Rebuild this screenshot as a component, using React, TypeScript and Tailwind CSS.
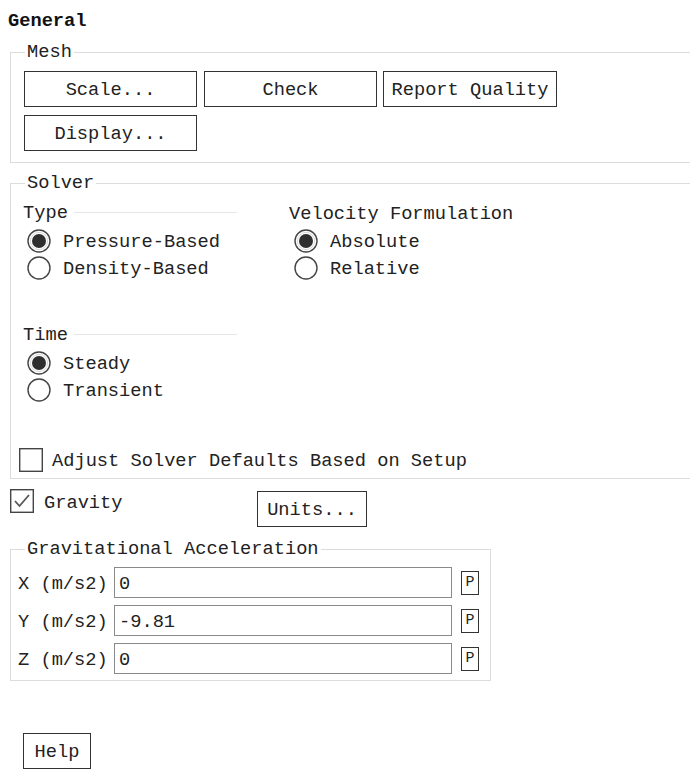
import React from "react";

const font = "font-['Liberation_Mono','DejaVu_Sans_Mono',monospace]";

function Radio({ checked, label }: { checked?: boolean; label: string }) {
  return (
    <div className="flex h-[27px] items-center gap-[12px]">
      <svg width="24" height="24" viewBox="0 0 24 24" className="shrink-0">
        <circle cx="12" cy="12" r="11" fill="#fff" stroke="#444" strokeWidth="1.4" />
        {checked ? (
          <>
            <circle cx="12" cy="12" r="8.6" fill="none" stroke="#d8d8d8" strokeWidth="1" />
            <circle cx="12" cy="12" r="7" fill="#2e2e2e" />
          </>
        ) : null}
      </svg>
      <span className="pt-[2px]">{label}</span>
    </div>
  );
}

function Check({ checked }: { checked?: boolean }) {
  return (
    <svg width="24" height="24" viewBox="0 0 24 24" className="shrink-0">
      <rect x="0.7" y="0.7" width="22.6" height="22.6" fill="#fff" stroke="#444" strokeWidth="1.4" />
      {checked ? (
        <polyline points="5,12 9.5,17 19,6" fill="none" stroke="#555" strokeWidth="1.8" />
      ) : null}
    </svg>
  );
}

function Btn({ children, className = "" }: { children: React.ReactNode; className?: string }) {
  return (
    <button
      type="button"
      className={`flex h-[36px] items-center justify-center border-[1.5px] border-[#333] bg-white pt-[2px] text-[#222] ${className}`}
    >
      {children}
    </button>
  );
}

function SubHeading({ label }: { label: string }) {
  return (
    <div className="ml-[-1px] flex h-[22px] w-[214px] items-center gap-[6px]">
      <span className="pt-[2px]">{label}</span>
      <div className="h-px flex-1 bg-[#e6e6e6]" />
    </div>
  );
}

function AccelRow({ axis, value }: { axis: string; value: string }) {
  return (
    <div className="flex h-[31px] items-center">
      <span className="w-[96px] pt-[2px]">{axis} (m/s2)</span>
      <div className="flex h-[31px] w-[338px] items-center border border-[#8a8a8a] bg-white pl-[4px] pt-[2px]">
        {value}
      </div>
      <div className="ml-[9px] flex h-[24px] w-[18px] items-center justify-center border-[1.5px] border-[#333] text-[15px] leading-none">
        P
      </div>
    </div>
  );
}

export default function App() {
  return (
    <div className={`${font} h-[779px] w-[690px] overflow-hidden bg-white text-[18.7px] leading-[22px] text-[#222]`}>
      <div className="pl-[8px] pt-[10px] font-bold text-[#111]">General</div>

      <fieldset className="ml-[10px] mr-[-20px] mt-[9px] border border-[#dcdcdc] pb-[11px] pl-[13px] pt-[8px]">
        <legend className="ml-[1px] px-[2px]">Mesh</legend>
        <div className="flex gap-[7px]">
          <Btn className="w-[173px]">Scale...</Btn>
          <Btn className="w-[173px]">Check</Btn>
          <Btn className="ml-[-1px] w-[174px]">Report Quality</Btn>
        </div>
        <Btn className="mt-[8px] w-[173px]">Display...</Btn>
      </fieldset>

      <fieldset className="ml-[10px] mr-[-20px] mt-[9px] border border-[#dcdcdc] pb-[5px] pl-[13px] pt-[7px]">
        <legend className="ml-[1px] px-[2px]">Solver</legend>
        <div className="flex">
          <div className="w-[265px]">
            <SubHeading label="Type" />
            <div className="ml-[3px] mt-[4px]">
              <Radio checked label="Pressure-Based" />
              <Radio label="Density-Based" />
            </div>
          </div>
          <div>
            <div className="h-[22px] pt-[2px]">Velocity Formulation</div>
            <div className="ml-[5px] mt-[4px]">
              <Radio checked label="Absolute" />
              <Radio label="Relative" />
            </div>
          </div>
        </div>
        <div className="mt-[42px]">
          <SubHeading label="Time" />
          <div className="ml-[3px] mt-[4px]">
            <Radio checked label="Steady" />
            <Radio label="Transient" />
          </div>
        </div>
        <div className="ml-[-5px] mt-[43px] flex h-[27px] items-center gap-[9px]">
          <Check />
          <span className="pt-[2px]">Adjust Solver Defaults Based on Setup</span>
        </div>
      </fieldset>

      <div className="ml-[10px] mt-[10px] flex items-start">
        <div className="flex h-[24px] w-[247px] items-center gap-[10px]">
          <Check checked />
          <span className="pt-[3px]">Gravity</span>
        </div>
        <Btn className="mt-[2px] h-[35px] w-[110px]">Units...</Btn>
      </div>

      <fieldset className="ml-[10px] mt-[11px] w-[481px] border border-[#dcdcdc] pb-[6px] pl-[7px] pt-[7px]">
        <legend className="ml-[7px] px-[2px]">Gravitational Acceleration</legend>
        <div className="flex flex-col gap-[7px]">
          <AccelRow axis="X" value="0" />
          <AccelRow axis="Y" value="-9.81" />
          <AccelRow axis="Z" value="0" />
        </div>
      </fieldset>

      <Btn className="ml-[23px] mt-[52px] w-[68px]">Help</Btn>
    </div>
  );
}
